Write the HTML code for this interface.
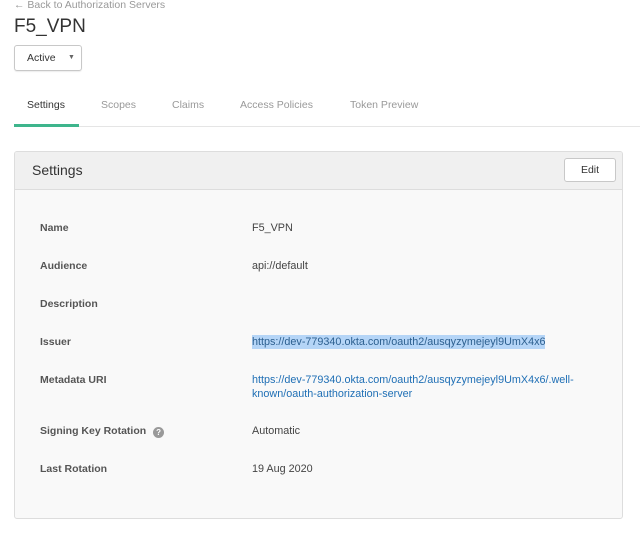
<!DOCTYPE html>
<html><head><style>
body{margin:0;background:#fff;font-family:"Liberation Sans",sans-serif;width:640px;height:538px;position:relative;overflow:hidden;color:#333}
.a{position:absolute;white-space:nowrap}
.l{position:absolute;left:40px;font-size:10.5px;font-weight:bold;color:#555}
.v{position:absolute;left:252px;font-size:10.8px;color:#444}
.lk{color:#1f6fb5}
</style></head><body>
<div class="a" style="left:14px;top:-1px;font-size:10.5px;color:#999">← Back to Authorization Servers</div>
<div class="a" style="left:14px;top:16px;font-size:19px;color:#333">F5_VPN</div>
<div class="a" style="left:14px;top:45px;width:68px;height:26px;border:1px solid #c8c8c8;border-radius:3px;box-sizing:border-box;box-shadow:0 1px 1px rgba(0,0,0,.08)"><span class="a" style="left:12px;top:6px;font-size:10.5px;color:#333">Active</span><span class="a" style="left:53px;top:8px;font-size:7px;color:#666">▼</span></div>
<div class="a" style="left:27px;top:99px;font-size:10.5px;color:#333">Settings</div>
<div class="a" style="left:101px;top:99px;font-size:10.5px;color:#999">Scopes</div>
<div class="a" style="left:172px;top:99px;font-size:10.5px;color:#999">Claims</div>
<div class="a" style="left:240px;top:99px;font-size:10.5px;color:#999">Access Policies</div>
<div class="a" style="left:350px;top:99px;font-size:10.5px;color:#999">Token Preview</div>
<div class="a" style="left:14px;top:126px;width:626px;height:1px;background:#e5e5e5"></div>
<div class="a" style="left:14px;top:124px;width:65px;height:3px;background:#3eb58c"></div>
<div class="a" style="left:14px;top:151px;width:609px;height:368px;border:1px solid #ddd;border-radius:3px;box-sizing:border-box;background:#f9f9f9;overflow:hidden">
<div class="a" style="left:0;top:0;width:609px;height:37px;background:#f0f0f0;border-bottom:1px solid #ddd"></div>
<div class="a" style="left:17px;top:10px;font-size:14px;color:#333">Settings</div>
<div class="a" style="left:549px;top:6px;width:52px;height:24px;border:1px solid #c8c8c8;border-radius:3px;box-sizing:border-box;background:#fff;font-size:10.5px;text-align:center;line-height:22px;color:#333">Edit</div>
</div>
<div class="l" style="top:222px">Name</div><div class="v" style="top:222px">F5_VPN</div>
<div class="l" style="top:260px">Audience</div><div class="v" style="top:260px">api://default</div>
<div class="l" style="top:298px">Description</div>
<div class="l" style="top:336px">Issuer</div><div class="v lk" style="top:335px;background:#b5d5f7;color:#2c5f8f;line-height:14px">https://dev-779340.okta.com/oauth2/ausqyzymejeyl9UmX4x6</div>
<div class="l" style="top:374px">Metadata URI</div><div class="v lk" style="top:373px;line-height:14px">https://dev-779340.okta.com/oauth2/ausqyzymejeyl9UmX4x6/.well-<br>known/oauth-authorization-server</div>
<div class="l" style="top:425px">Signing Key Rotation <span style="display:inline-block;width:11px;height:11px;border-radius:50%;background:#999;color:#fff;font-size:8px;text-align:center;line-height:11px;margin-left:4px;vertical-align:-1px">?</span></div><div class="v" style="top:425px">Automatic</div>
<div class="l" style="top:463px">Last Rotation</div><div class="v" style="top:463px">19 Aug 2020</div>
</body></html>
